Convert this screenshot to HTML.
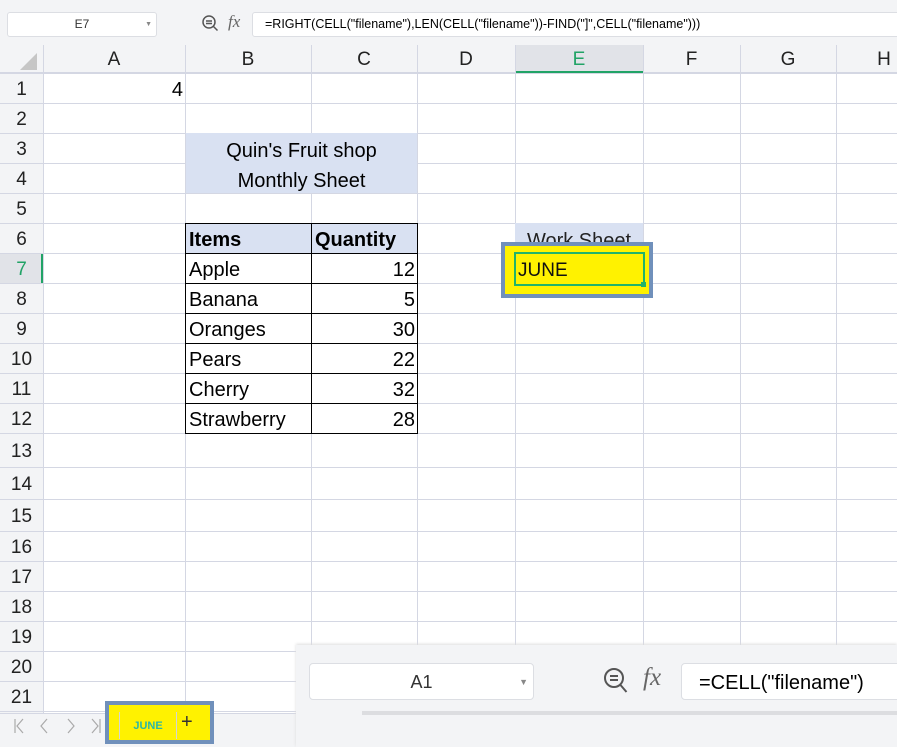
<!DOCTYPE html>
<html><head><meta charset="utf-8"><style>
*{margin:0;padding:0;box-sizing:border-box}
body{width:897px;height:747px;overflow:hidden;background:#fff;font-family:"Liberation Sans",sans-serif;position:relative}
.a{position:absolute}
.hl{position:absolute;height:1px;background:#d4d7e3}
.vl{position:absolute;width:1px;background:#d4d7e3}
.rh{position:absolute;left:0;width:43px;text-align:center;font-size:19px;color:#222}
.ch{position:absolute;top:45px;height:28px;line-height:30px;text-align:center;font-size:19px;color:#222}
.c{position:absolute;font-size:20px;color:#000;line-height:30px;height:30px}
</style></head><body>
<div class="a" style="left:0;top:0;width:897px;height:45px;background:#f3f4f6"></div>
<div class="a" style="left:7px;top:12px;width:150px;height:25px;background:#fff;border:1px solid #dcdee3;border-radius:3px;font-size:12px;text-align:center;line-height:23px;color:#333">E7<span class="a" style="right:4px;top:0;font-size:7px;color:#888">▼</span></div>
<svg class="a" style="left:201px;top:14px" width="20" height="20" viewBox="0 0 20 20"><circle cx="8" cy="8" r="6" fill="none" stroke="#555" stroke-width="1.5"/><path d="M5 7h6M5 9.5h6M12.5 12.5l4 4" stroke="#555" stroke-width="1.5"/></svg>
<div class="a" style="left:228px;top:12px;font-family:'Liberation Serif',serif;font-style:italic;font-size:17px;color:#666">fx</div>
<div class="a" style="left:252px;top:12px;width:650px;height:25px;background:#fff;border:1px solid #dcdee3;border-radius:3px;font-size:12.5px;line-height:23px;padding-left:12px;color:#000">=RIGHT(CELL("filename"),LEN(CELL("filename"))-FIND("]",CELL("filename")))</div>
<div class="a" style="left:0;top:45px;width:897px;height:28px;background:#f3f4f6;border-bottom:1px solid #d4d7e3"></div>
<div class="a" style="left:0;top:73px;width:43px;height:650px;background:#f3f4f6"></div>
<div class="a" style="left:515px;top:45px;width:128px;height:28px;background:#e1e3e8;border-bottom:2px solid #21a366"></div>
<div class="a" style="left:0;top:253px;width:43px;height:30px;background:#e1e3e8;border-right:2px solid #21a366"></div>
<svg class="a" style="left:20px;top:53px" width="17" height="17"><path d="M17 0V17H0Z" fill="#c6c6c6"/></svg>
<div id="g"></div>
<div class="a" style="left:186px;top:133px;width:231px;height:60px;background:#d9e1f2"></div>
<div class="c" style="left:186px;top:136px;width:231px;text-align:center">Quin's Fruit shop</div>
<div class="c" style="left:186px;top:166px;width:231px;text-align:center">Monthly Sheet</div>
<div class="a" style="left:186px;top:223px;width:231px;height:30px;background:#d9e1f2"></div>
<div class="a" style="left:515px;top:223px;width:128px;height:30px;background:#d9e1f2"></div>
<div class="c" style="left:515px;top:226px;width:128px;text-align:center;color:#222">Work Sheet</div>
<div id="t"></div>
<div class="c" style="left:43px;top:75px;width:140px;text-align:right">4</div>
<div class="a" style="left:501px;top:242px;width:152px;height:56px;border:4px solid #7090bb;background:#fff200"></div>
<div class="a" style="left:514px;top:252px;width:131px;height:34px;border:2px solid #21b36a"></div>
<div class="a" style="left:641px;top:282px;width:5px;height:5px;background:#21b36a"></div>
<div class="c" style="left:518px;top:256px;font-size:19px;color:#111">JUNE</div>
<div class="a" style="left:0;top:713px;width:897px;height:34px;background:#f3f4f6;border-top:1px solid #d4d7e3"></div>
<svg class="a" style="left:10px;top:716px" width="95" height="20" viewBox="0 0 95 20"><g fill="none" stroke="#aaa" stroke-width="1.2"><path d="M5 3v14M13 3l-6 7 6 7M37 3l-6 7 6 7M58 3l6 7-6 7M82 3l6 7-6 7M90 3v14"/></g></svg>
<div class="a" style="left:105px;top:701px;width:109px;height:43px;border:4px solid #7090bb;background:#fff200"></div>
<div class="a" style="left:119px;top:712px;width:58px;height:27px;border-right:1px solid #d4d4d4;border-left:1px solid #d4d4d4;font-size:11px;font-weight:bold;color:#2bb6a8;text-align:center;line-height:28px">JUNE</div>
<div class="a" style="left:181px;top:711px;font-size:20px;color:#333">+</div>
<div class="a" style="left:296px;top:645px;width:601px;height:102px;background:#f3f4f6;box-shadow:0 -1px 3px #ddd"></div>
<div class="a" style="left:309px;top:663px;width:225px;height:37px;background:#fff;border:1px solid #dcdee3;border-radius:4px;font-size:18px;text-align:center;line-height:37px;color:#333">A1<span class="a" style="right:5px;top:0;font-size:9px;color:#888">▼</span></div>
<svg class="a" style="left:602px;top:665px" width="28" height="30" viewBox="0 0 28 30"><circle cx="12" cy="13" r="9" fill="none" stroke="#555" stroke-width="2"/><path d="M8 11h8M8 15h8M18.5 20l6 7" stroke="#555" stroke-width="2"/></svg>
<div class="a" style="left:643px;top:664px;font-family:'Liberation Serif',serif;font-style:italic;font-size:25px;color:#666">fx</div>
<div class="a" style="left:681px;top:663px;width:230px;height:37px;background:#fff;border:1px solid #dcdee3;border-radius:4px;font-size:20px;line-height:39px;padding-left:17px;color:#000">=CELL("filename")</div>
<div class="a" style="left:362px;top:711px;width:535px;height:4px;background:#dcdde0"></div>
<script>
var g='',cols=[43,185,311,417,515,643,740,836],names=['A','B','C','D','E','F','G','H'];
var rows=[73,103,133,163,193,223,253,283,313,343,373,403,433,467,499,531,561,591,621,651,681,711];
for(var i=0;i<cols.length;i++){g+='<div class="vl" style="left:'+cols[i]+'px;top:45px;height:668px"></div>';
var r=(cols[i+1]||932);g+='<div class="ch" style="left:'+cols[i]+'px;width:'+(r-cols[i])+'px'+(i==4?';color:#21a366':'')+'">'+names[i]+'</div>';}
for(var j=0;j<rows.length;j++){g+='<div class="hl" style="left:0;top:'+rows[j]+'px;width:897px"></div>';
if(j<21)g+='<div class="rh" style="top:'+rows[j]+'px;height:'+(rows[j+1]-rows[j])+'px;line-height:'+(rows[j+1]-rows[j]+3)+'px'+(j==6?';color:#21a366':'')+'">'+(j+1)+'</div>';}
document.getElementById('g').innerHTML=g;
var d=[['Items','Quantity'],['Apple',12],['Banana',5],['Oranges',30],['Pears',22],['Cherry',32],['Strawberry',28]],t='';
t+='<div class="a" style="left:185px;top:223px;width:233px;height:211px;border:1px solid #000"></div><div class="a" style="left:311px;top:223px;width:1px;height:211px;background:#000"></div>';
for(var k=0;k<d.length;k++){var y=223+k*30;if(k)t+='<div class="a" style="left:185px;top:'+y+'px;width:233px;height:1px;background:#000"></div>';
var b=k==0?'font-weight:bold;':'';
t+='<div class="c" style="'+b+'left:189px;top:'+(y+2)+'px">'+d[k][0]+'</div>';
t+='<div class="c" style="'+b+(k==0?'left:315px':'left:311px;width:104px;text-align:right')+';top:'+(y+2)+'px">'+d[k][1]+'</div>';}
document.getElementById('t').innerHTML=t;
</script>
</body></html>
